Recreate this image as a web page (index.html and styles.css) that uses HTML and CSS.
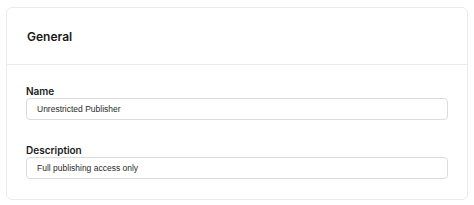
FILE: index.html
```html
<!DOCTYPE html>
<html lang="en">
<head>
    <meta charset="UTF-8">
    <title>General</title>
    <link rel="stylesheet" href="styles.css">
</head>
<body>
    <div class="card">
        <header class="card-header">
            <h2 class="card-title">General</h2>
        </header>
        <div class="card-body">
            <div class="field">
                <label class="field-label" for="name">Name</label>
                <input class="field-input" id="name" type="text" value="Unrestricted Publisher">
            </div>
            <div class="field">
                <label class="field-label" for="description">Description</label>
                <input class="field-input" id="description" type="text" value="Full publishing access only">
            </div>
        </div>
    </div>
</body>
</html>
```

FILE: styles.css
```css
* {
    margin: 0;
    padding: 0;
    box-sizing: border-box;
}

body {
    background: #fff;
    font-family: Inter, "Noto Sans", sans-serif;
    color: #1a1a1a;
    padding: 7px 6px;
}

.card {
    width: 462px;
    height: 193px;
    border: 1px solid #ebebeb;
    border-radius: 6px;
    display: flex;
    flex-direction: column;
}
.card-header {
    height: 57px;
    padding-left: 20px;
    display: flex;
    align-items: center;
    border-bottom: 1px solid #ebebeb;
}
.card-title {
    font-size: 12px;
    font-weight: 600;
}
.card-body {
    padding: 20px 19px 0 19px;
    display: flex;
    flex-direction: column;
    gap: 24px;
}
.field {
    display: flex;
    flex-direction: column;
}
.field-label {
    font-size: 10px;
    font-weight: 600;
    line-height: 12px;
    margin-bottom: 1px;
}
.field-input {
    height: 22px;
    width: 100%;
    border: 1px solid #dcdcdc;
    border-radius: 4px;
    padding: 0 10px;
    font-family: "Liberation Sans", Arial, sans-serif;
    font-size: 8.5px;
    color: #2a2a2a;
    background: #fff;
    outline: none;
}
```
